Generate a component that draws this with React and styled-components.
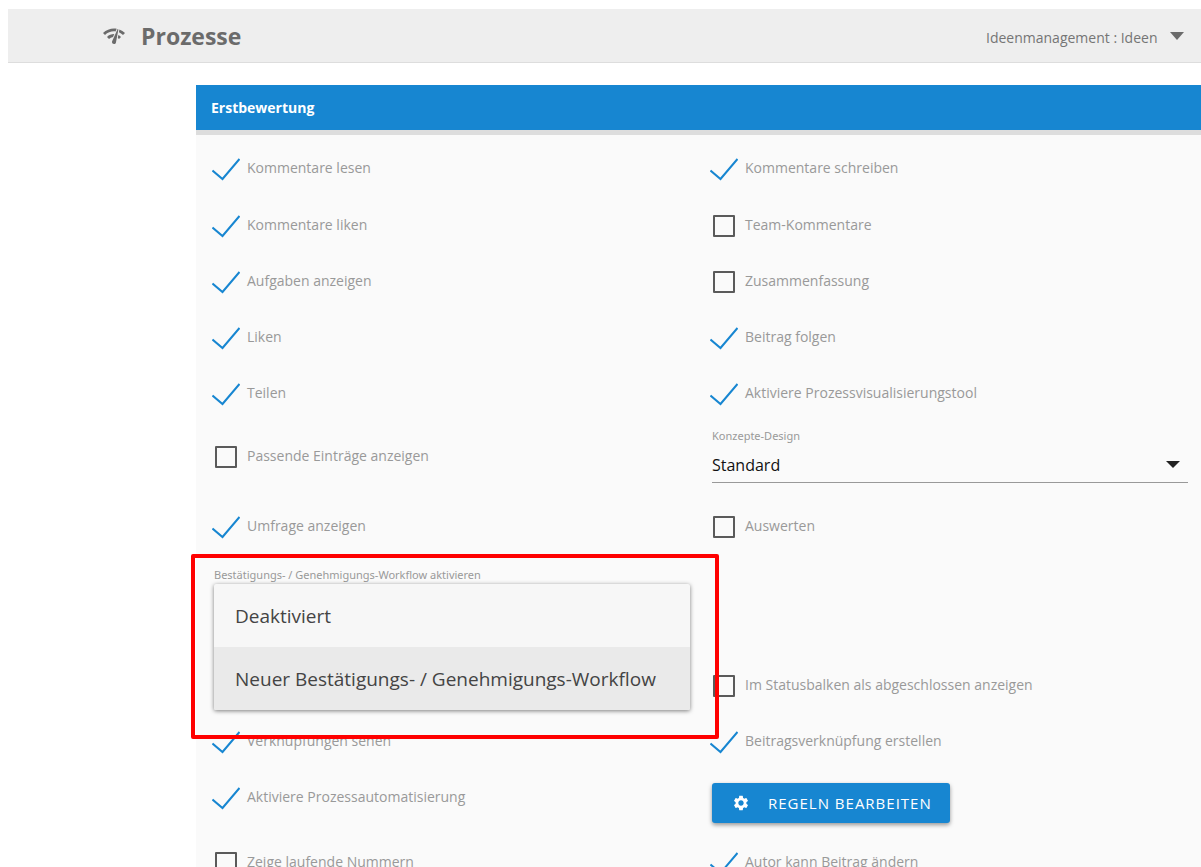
import React from "react";
import styled, { createGlobalStyle } from "styled-components";
import { MdNetworkCheck, MdSettings } from "react-icons/md";

const GlobalStyle = createGlobalStyle`
  *, *::before, *::after { box-sizing: border-box; }
  body {
    margin: 0;
    background: #fff;
    font-family: "Segoe UI", "Open Sans", "Noto Sans", sans-serif;
    font-size: 14px;
    color: #999;
  }
  select, button, input { font-family: inherit; }
`;

const Page = styled.div`
  height: 100vh;
  overflow: hidden;
  padding: 9px 0 0 8px;
`;

const Header = styled.header`
  display: flex;
  align-items: center;
  justify-content: space-between;
  height: 54px;
  padding: 0 17px 0 94px;
  background: #eee;
  border-bottom: 1px solid #ddd;
  color: #6b6b6b;
`;

const Title = styled.h1`
  display: flex;
  align-items: center;
  gap: 15px;
  margin: 0;
  font-size: 23px;
  line-height: 32px;
  font-weight: 700;
`;

const ScopePicker = styled.label`
  display: flex;
  align-items: center;
  gap: 12px;
`;

const ScopeSelect = styled.select`
  appearance: none;
  border: 0;
  padding: 4px 0 0;
  background: transparent;
  color: #757575;
  font-size: 14px;
  line-height: 20px;
`;

const Panel = styled.section`
  margin: 22px 0 0 188px;
  background: #fafafa;
`;

const PanelTitle = styled.h2`
  margin: 0;
  padding: 0 15px;
  height: 50px;
  line-height: 45px;
  background: #1786d1;
  border-bottom: 5px solid #ddd;
  color: #fff;
  font-size: 14px;
  font-weight: 700;
`;

const Options = styled.form`
  padding: 5px 13px 0 18px;
`;

const Row = styled.div`
  display: grid;
  grid-template-columns: 1fr 1fr;
  column-gap: 22px;
  align-items: ${(p) => p.$align || "center"};
  height: ${(p) => p.$height || 56}px;
`;

const CheckLabel = styled.label`
  display: flex;
  align-items: center;
  gap: 9px;
  font-size: 14px;
  line-height: 20px;
`;

const Slot = styled.span`
  display: grid;
  grid-template-columns: 24px;
  place-items: center;
  width: 24px;
  height: 24px;
  padding-top: 2px;
  > * { grid-area: 1 / 1; }
`;

const Tick = styled.svg`
  display: none;
  width: 28px;
  height: 24px;
  fill: none;
  stroke: #1786d1;
  stroke-width: 2;
  pointer-events: none;
`;

const Box = styled.input`
  appearance: none;
  width: 22px;
  height: 22px;
  margin: 0;
  border: 2px solid #5a5a5a;
  border-radius: 1px;
  &:checked { border-color: transparent; }
  &:checked + ${Tick} { display: block; }
`;

const Field = styled.div`
  position: relative;
  display: flex;
  flex-direction: column;
  align-self: start;
  padding-top: ${(p) => p.$top || 6}px;
`;

const FieldLabel = styled.label`
  font-family: "Segoe UI", "Noto Sans", "Open Sans", sans-serif;
  font-size: 11px;
  line-height: 16px;
`;

const SelectLine = styled.div`
  display: grid;
  align-items: center;
  border-bottom: 1px solid #999;
  height: 39px;
  padding-top: 3px;
  > * { grid-area: 1 / 1; }
  > svg { justify-self: end; margin-right: 8px; pointer-events: none; }
`;

const FieldSelect = styled.select`
  appearance: none;
  width: 100%;
  padding: 0;
  border: 0;
  background: transparent;
  color: #111;
  font-size: 16px;
  line-height: 24px;
`;

const Menu = styled.select`
  position: absolute;
  z-index: 2;
  top: 23px;
  left: 0;
  width: 100%;
  height: 126px;
  padding: 0;
  border: 0;
  outline: 0;
  overflow: hidden;
  appearance: none;
  background: #f7f7f7;
  box-shadow: 0 1px 4px rgba(0, 0, 0, 0.5);
  font-size: 19px;
`;

const MenuItem = styled.option`
  height: 63px;
  min-height: 63px;
  padding: 19px 21px;
  line-height: 25px;
  color: #444;
  &:checked {
    background: #eaeaea linear-gradient(#eaeaea, #eaeaea);
    color: #444;
  }
`;

const Highlight = styled.div`
  position: absolute;
  z-index: 3;
  top: -7px;
  left: -23px;
  right: -29px;
  height: 185px;
  border: 4px solid #f00;
  border-radius: 2px;
  pointer-events: none;
`;

const RulesButton = styled.button`
  display: flex;
  align-items: center;
  gap: 18px;
  justify-self: start;
  height: 40px;
  margin-top: 14px;
  padding: 0 18px 0 20px;
  border: 0;
  border-radius: 3px;
  background: #1786d1;
  color: #fff;
  box-shadow: 0 2px 4px rgba(0, 0, 0, 0.4);
  font-size: 15px;
  line-height: 20px;
  letter-spacing: 1px;
`;

const TopCheck = styled.div`
  padding-top: 16px;
`;

function Arrow({ width, height, color }) {
  return (
    <svg width={width} height={height} viewBox="0 0 14 8" preserveAspectRatio="none" fill={color} aria-hidden="true">
      <path d="M0 0h14L7 8z" />
    </svg>
  );
}

function Check({ label, checked = false }) {
  return (
    <CheckLabel>
      <Slot>
        <Box type="checkbox" defaultChecked={checked} />
        <Tick viewBox="0 0 28 24" aria-hidden="true">
          <path d="M.5 12.5 10.500 21 27.500 1" />
        </Tick>
      </Slot>
      {label}
    </CheckLabel>
  );
}

export default function App() {
  return (
    <Page>
      <GlobalStyle />
      <Header>
        <Title>
          <MdNetworkCheck size={24} aria-hidden="true" />
          Prozesse
        </Title>
        <ScopePicker>
          <ScopeSelect aria-label="Bereich">
            <option>Ideenmanagement : Ideen</option>
          </ScopeSelect>
          <Arrow width={14} height={8} color="#6b6b6b" />
        </ScopePicker>
      </Header>
      <Panel>
        <PanelTitle>Erstbewertung</PanelTitle>
        <Options>
          <Row>
            <Check label="Kommentare lesen" checked />
            <Check label="Kommentare schreiben" checked />
          </Row>
          <Row $height={57}>
            <Check label="Kommentare liken" checked />
            <Check label="Team-Kommentare" />
          </Row>
          <Row>
            <Check label="Aufgaben anzeigen" checked />
            <Check label="Zusammenfassung" />
          </Row>
          <Row>
            <Check label="Liken" checked />
            <Check label="Beitrag folgen" checked />
          </Row>
          <Row>
            <Check label="Teilen" checked />
            <Check label="Aktiviere Prozessvisualisierungstool" checked />
          </Row>
          <Row $height={70}>
            <Check label="Passende Einträge anzeigen" />
            <Field $top={7}>
              <FieldLabel htmlFor="design">Konzepte-Design</FieldLabel>
              <SelectLine>
                <FieldSelect id="design">
                  <option>Standard</option>
                </FieldSelect>
                <Arrow width={14} height={7} color="#222" />
              </SelectLine>
            </Field>
          </Row>
          <Row $height={70}>
            <Check label="Umfrage anzeigen" checked />
            <Check label="Auswerten" />
          </Row>
          <Row $height={96}>
            <Field>
              <FieldLabel htmlFor="workflow">Bestätigungs- / Genehmigungs-Workflow aktivieren</FieldLabel>
              <Menu id="workflow" size={2} defaultValue="neu">
                <MenuItem value="aus">Deaktiviert</MenuItem>
                <MenuItem value="neu">Neuer Bestätigungs- / Genehmigungs-Workflow</MenuItem>
              </Menu>
              <Highlight />
            </Field>
          </Row>
          <Row>
            <span />
            <Check label="Im Statusbalken als abgeschlossen anzeigen" />
          </Row>
          <Row>
            <Check label="Verknüpfungen sehen" checked />
            <Check label="Beitragsverknüpfung erstellen" checked />
          </Row>
          <Row $height={65} $align="start">
            <TopCheck>
              <Check label="Aktiviere Prozessautomatisierung" checked />
            </TopCheck>
            <RulesButton type="button">
              <MdSettings size={18} aria-hidden="true" />
              REGELN BEARBEITEN
            </RulesButton>
          </Row>
          <Row>
            <Check label="Zeige laufende Nummern" />
            <Check label="Autor kann Beitrag ändern" checked />
          </Row>
        </Options>
      </Panel>
    </Page>
  );
}
